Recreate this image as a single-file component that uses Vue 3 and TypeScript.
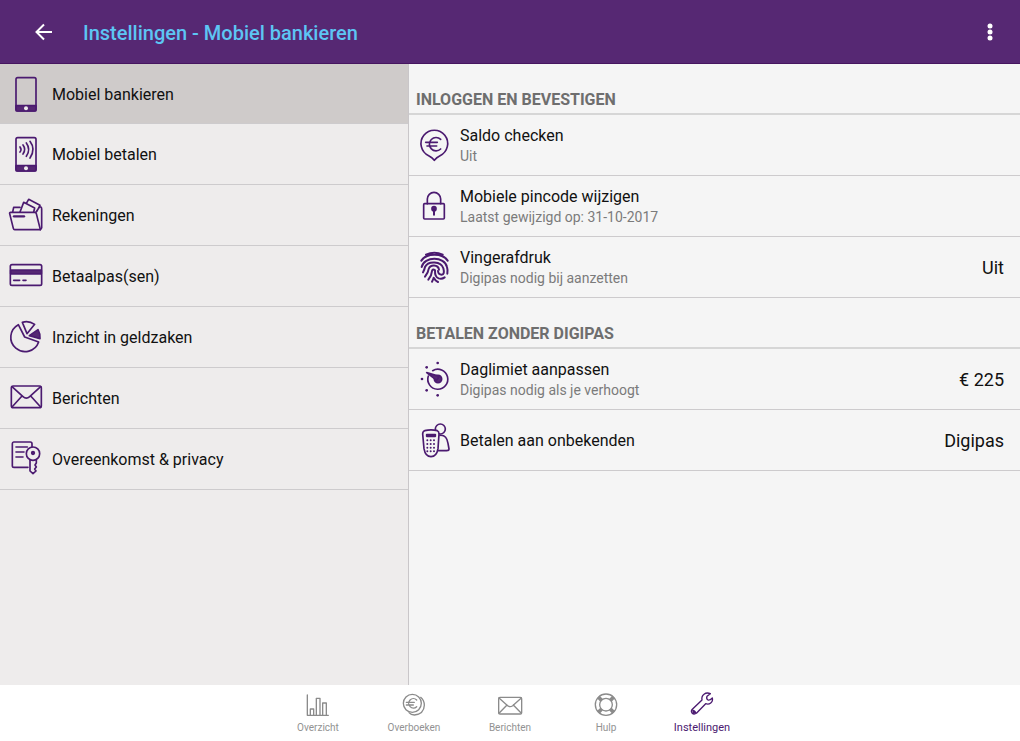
<script setup lang="ts">
import { ref } from 'vue'

interface MenuItem {
  id: string
  label: string
}

interface SettingRow {
  id: string
  title: string
  subtitle?: string
  value?: string
}

interface SettingSection {
  heading: string
  rows: SettingRow[]
}

const menu: MenuItem[] = [
  { id: 'phone', label: 'Mobiel bankieren' },
  { id: 'contactless', label: 'Mobiel betalen' },
  { id: 'wallet', label: 'Rekeningen' },
  { id: 'card', label: 'Betaalpas(sen)' },
  { id: 'pie', label: 'Inzicht in geldzaken' },
  { id: 'mail', label: 'Berichten' },
  { id: 'agreement', label: 'Overeenkomst & privacy' },
]

const sections: SettingSection[] = [
  {
    heading: 'INLOGGEN EN BEVESTIGEN',
    rows: [
      { id: 'balance', title: 'Saldo checken', subtitle: 'Uit' },
      { id: 'lock', title: 'Mobiele pincode wijzigen', subtitle: 'Laatst gewijzigd op: 31-10-2017' },
      { id: 'finger', title: 'Vingerafdruk', subtitle: 'Digipas nodig bij aanzetten', value: 'Uit' },
    ],
  },
  {
    heading: 'BETALEN ZONDER DIGIPAS',
    rows: [
      { id: 'dial', title: 'Daglimiet aanpassen', subtitle: 'Digipas nodig als je verhoogt', value: '€ 225' },
      { id: 'device', title: 'Betalen aan onbekenden', value: 'Digipas' },
    ],
  },
]

const tabs: MenuItem[] = [
  { id: 'overview', label: 'Overzicht' },
  { id: 'transfer', label: 'Overboeken' },
  { id: 'messages', label: 'Berichten' },
  { id: 'help', label: 'Hulp' },
  { id: 'settings', label: 'Instellingen' },
]

const selected = ref('phone')
const activeTab = ref('settings')
const keypadRows = [55, 66, 77, 88]
const keypadColumns = [34, 44, 54]
</script>

<template>
  <div class="app">
    <header class="topbar">
      <button class="icon-button" type="button" aria-label="Terug">
        <svg class="glyph" viewBox="0 0 48 48"><path d="M40 24H10M24 9 9 24l15 15" fill="none" stroke="#fff" stroke-width="4" /></svg>
      </button>
      <h1>Instellingen - Mobiel bankieren</h1>
      <button class="icon-button" type="button" aria-label="Meer opties">
        <svg class="glyph" viewBox="0 0 48 48"><g fill="#fff"><circle cx="24" cy="12" r="5" /><circle cx="24" cy="24" r="5" /><circle cx="24" cy="36" r="5" /></g></svg>
      </button>
    </header>

    <div class="body">
      <nav class="menu" aria-label="Instellingen">
        <button
          v-for="item in menu"
          :key="item.id"
          type="button"
          class="menu-item"
          :class="{ selected: selected === item.id }"
          @click="selected = item.id"
        >
          <svg class="icon" viewBox="0 0 108 108" aria-hidden="true">
            <g v-if="item.id === 'phone' || item.id === 'contactless'">
              <rect x="24" y="5" width="60" height="100" rx="5" />
              <path class="solid" d="M24 89H84V101Q84 105 80 105H28Q24 105 24 101Z" />
              <circle class="knob" cx="54" cy="97" r="6" />
              <path v-if="item.id === 'contactless'" d="M36 33q6 8 0 15M45 27q10 13 0 27M55 21q14 19 0 40M66 16q18 24 0 50" />
            </g>
            <g v-else-if="item.id === 'wallet'">
              <path d="M8 46H80Q84 46 85 50L97 98H20Q17 98 16 94L5 50Q4 46 8 46Z" />
              <path d="M84 45 94 31Q101 27 101 36V92L97 98M14 45 17 31H36M36 45 47 16 80 33 77 45M55 19 62 7 96 25 86 44" />
              <path d="M18 58H48" stroke-width="7" />
            </g>
            <g v-else-if="item.id === 'card'">
              <rect x="7" y="20" width="94" height="62" rx="5" />
              <path class="solid" d="M8 36H100V48H8Z" />
              <path d="M17 67H35M45 67H54" />
            </g>
            <g v-else-if="item.id === 'pie'">
              <path d="M31 17A43 43 0 1 0 92 69L50 54Z" />
              <path d="M57 44 43 10Q62 4 80 16Z" />
              <path class="solid" d="M64 50 90 32Q97 44 96 59Z" />
            </g>
            <g v-else-if="item.id === 'mail'">
              <rect x="10" y="18" width="90" height="65" rx="6" />
              <path d="M12 20 45 50Q55 59 65 50L98 20M12 81 42 48M98 81 68 48" />
            </g>
            <g v-else>
              <path d="M72 18V8Q72 3 67 3H17Q13 3 13 8V74Q13 79 18 79H60M24 18H58M24 33H48M24 48H45" />
              <circle cx="75" cy="38" r="20" />
              <circle class="solid" cx="75" cy="36" r="4" />
              <path d="M66 56V90L75 98 84 90 80 84 85 78 81 72 85 66V56" />
            </g>
          </svg>
          <span class="label">{{ item.label }}</span>
        </button>
      </nav>

      <main class="content">
        <section v-for="section in sections" :key="section.heading">
          <h2>{{ section.heading }}</h2>
          <button v-for="row in section.rows" :key="row.id" type="button" class="row">
            <svg class="icon" viewBox="0 0 108 108" aria-hidden="true">
              <g v-if="row.id === 'balance'">
                <path d="M38 86A40 40 0 1 1 72 86Q61 91 55 100Q49 91 38 86Z" />
                <path d="M74 37A20 20 0 1 0 74 66M29 46H64M33 57H62" />
              </g>
              <g v-else-if="row.id === 'lock'">
                <rect x="23" y="47" width="62" height="46" rx="3" />
                <path d="M34 47V33A20 20 0 0 1 74 33V47" />
                <circle class="solid" cx="54" cy="62" r="6" />
                <path d="M54 64V80" stroke-width="6" />
              </g>
              <g v-else-if="row.id === 'finger'" stroke-width="6">
                <path d="M30 17Q55 5 80 17M16 35C32 11 79 11 95 35" />
                <path d="M17 54C24 21 86 21 93 54Q96 64 94 74" />
                <path d="M21 70Q26 60 27 54C36 34 76 36 82 58Q87 76 77 77Q67 77 66 66" />
                <path d="M27 83Q37 70 38 60C43 46 66 46 69 62" />
                <path d="M37 92Q47 80 48 66Q50 58 57 64Q56 84 68 88Q78 91 86 85" />
                <path d="M48 98Q52 91 53 86Q58 95 66 99" />
              </g>
              <g v-else-if="row.id === 'dial'">
                <path d="M50 29A30 30 0 1 1 37 45" />
                <circle class="solid" cx="66" cy="54" r="11" />
                <path class="solid" d="M32 35 70 46 62 58Z" />
                <g class="dots">
                  <circle cx="65" cy="6" r="4" /><circle cx="32" cy="19" r="4" /><circle cx="18" cy="54" r="4" />
                  <circle cx="32" cy="88" r="4" /><circle cx="65" cy="103" r="4" />
                </g>
              </g>
              <g v-else>
                <circle cx="73" cy="21" r="15" />
                <path d="M72 40Q92 38 96 64L99 81Q99 86 92 86H67" />
                <path class="shell" d="M26 26Q45 21 64 26Q69 28 69 36L66 80Q62 104 45 104Q28 104 24 80L20 36Q20 28 26 26Z" />
                <path class="solid" d="M32 38H58V43H32Z" />
                <g class="dots">
                  <template v-for="y in keypadRows" :key="y">
                    <circle v-for="x in keypadColumns" :key="x" :cx="x" :cy="y" r="3" />
                  </template>
                </g>
              </g>
            </svg>
            <span class="texts">
              <span class="title">{{ row.title }}</span>
              <span v-if="row.subtitle" class="subtitle">{{ row.subtitle }}</span>
            </span>
            <span v-if="row.value" class="value">{{ row.value }}</span>
          </button>
        </section>
      </main>
    </div>

    <nav class="tabs" aria-label="Hoofdmenu">
      <button
        v-for="tab in tabs"
        :key="tab.id"
        type="button"
        class="tab"
        :class="{ active: activeTab === tab.id }"
        @click="activeTab = tab.id"
      >
        <svg class="tab-icon" viewBox="0 0 84 84" aria-hidden="true">
          <g v-if="tab.id === 'overview'">
            <path d="M10 12V73H73M19 73V54H29V73M37 73V22H48V73M56 73V36H67V73" />
          </g>
          <g v-else-if="tab.id === 'transfer'">
            <circle cx="37" cy="37" r="27" />
            <path d="M62 19Q73 28 73 43Q72 70 43 72Q33 72 27 65" />
            <path d="M50 27A14 14 0 1 0 50 47M19 34H43M19 42H40" />
          </g>
          <g v-else-if="tab.id === 'messages'">
            <rect x="8" y="19" width="69" height="50" rx="4" />
            <path d="M9 21 35 44Q42 50 50 44L76 21M9 67 33 42M76 67 52 42" />
          </g>
          <g v-else-if="tab.id === 'help'">
            <circle cx="42" cy="41" r="32" />
            <circle cx="42" cy="41" r="19" />
            <path d="M19 18 29 28M65 18 55 28M19 64 29 54M65 64 55 54" stroke-width="11" stroke-linecap="butt" />
          </g>
          <g v-else>
            <path d="M42 27C39 12 53 2 67 8L57 16Q54 24 60 27Q65 29 73 21C76 34 64 42 53 38L26 66Q18 72 12 66Q8 60 13 55Z" />
            <path d="M14 57 24 65" />
            <circle class="solid" cx="18" cy="63" r="3" />
          </g>
        </svg>
        <span>{{ tab.label }}</span>
      </button>
    </nav>
  </div>
</template>

<style>
body {
  margin: 0;
}
</style>

<style scoped>
.app {
  display: flex;
  flex-direction: column;
  min-height: 100vh;
  font-family: Roboto, "Noto Sans", sans-serif;
  color: #111;
  background: #f5f5f5;
}

button {
  margin: 0;
  padding: 0;
  border: 0;
  background: none;
  font: inherit;
  color: inherit;
  text-align: left;
  cursor: pointer;
}

.topbar {
  box-sizing: border-box;
  display: flex;
  align-items: center;
  height: 64px;
  padding: 0 18px 0 32px;
  background: #562873;
  border-bottom: 1px solid #461560;
}

.icon-button,
.glyph {
  display: block;
  width: 24px;
  height: 24px;
}

h1 {
  flex: 1;
  margin: 0 0 0 27px;
  padding-top: 2px;
  font-size: 20px;
  line-height: 24px;
  font-weight: 500;
  color: #5dc5f3;
}

.body {
  flex: 1;
  display: grid;
  grid-template-columns: 2fr 3fr;
}

.menu {
  background: #eeecec;
}

.menu-item,
.row {
  box-sizing: border-box;
  display: flex;
  align-items: center;
  gap: 8px;
  width: 100%;
  min-height: 61px;
  border-bottom: 1px solid #cdcbcd;
}

.menu-item {
  padding-left: 8px;
  font-size: 16px;
  line-height: 20px;
}

.menu-item.selected {
  min-height: 60px;
  background: #cfcbca;
}

.icon {
  flex: none;
  width: 36px;
  height: 36px;
}

.icon,
.tab-icon {
  fill: none;
  stroke: #4b1a70;
  stroke-width: 5;
  stroke-linecap: round;
  stroke-linejoin: round;
  overflow: visible;
}

.solid {
  fill: #562873;
}

.dots {
  fill: #4b1a70;
  stroke: none;
}

.knob {
  fill: #eeecec;
  stroke: none;
}

.shell {
  fill: #f5f5f5;
}

.content {
  border-left: 1px solid #c9c6c9;
}

h2 {
  box-sizing: border-box;
  height: 51px;
  margin: 0;
  padding: 26px 7px 0;
  border-bottom: 2px solid #d6d6d6;
  font-size: 16px;
  line-height: 20px;
  font-weight: 700;
  color: #6e6e6e;
}

.row {
  padding: 0 16px 0 7px;
}

.texts {
  flex: 1;
  display: flex;
  flex-direction: column;
  padding-top: 2px;
}

.label,
.value {
  padding-top: 2px;
}

.title {
  font-size: 16px;
  line-height: 20px;
}

.subtitle {
  font-size: 14px;
  line-height: 20px;
  color: #7b7b7b;
}

.value {
  font-size: 18px;
  line-height: 24px;
}

.tabs {
  box-sizing: border-box;
  display: flex;
  justify-content: center;
  height: 56px;
  background: #fff;
}

.tab {
  display: flex;
  flex-direction: column;
  align-items: center;
  width: 96px;
  padding-top: 6px;
  font-size: 10px;
  line-height: 18px;
  color: #929292;
}

.tab-icon {
  width: 28px;
  height: 28px;
  stroke: #8b8b8b;
  stroke-width: 4;
}

.tab.active {
  font-size: 11px;
  color: #4b1a70;
}

.tab.active .tab-icon {
  stroke: #4b1a70;
}
</style>
